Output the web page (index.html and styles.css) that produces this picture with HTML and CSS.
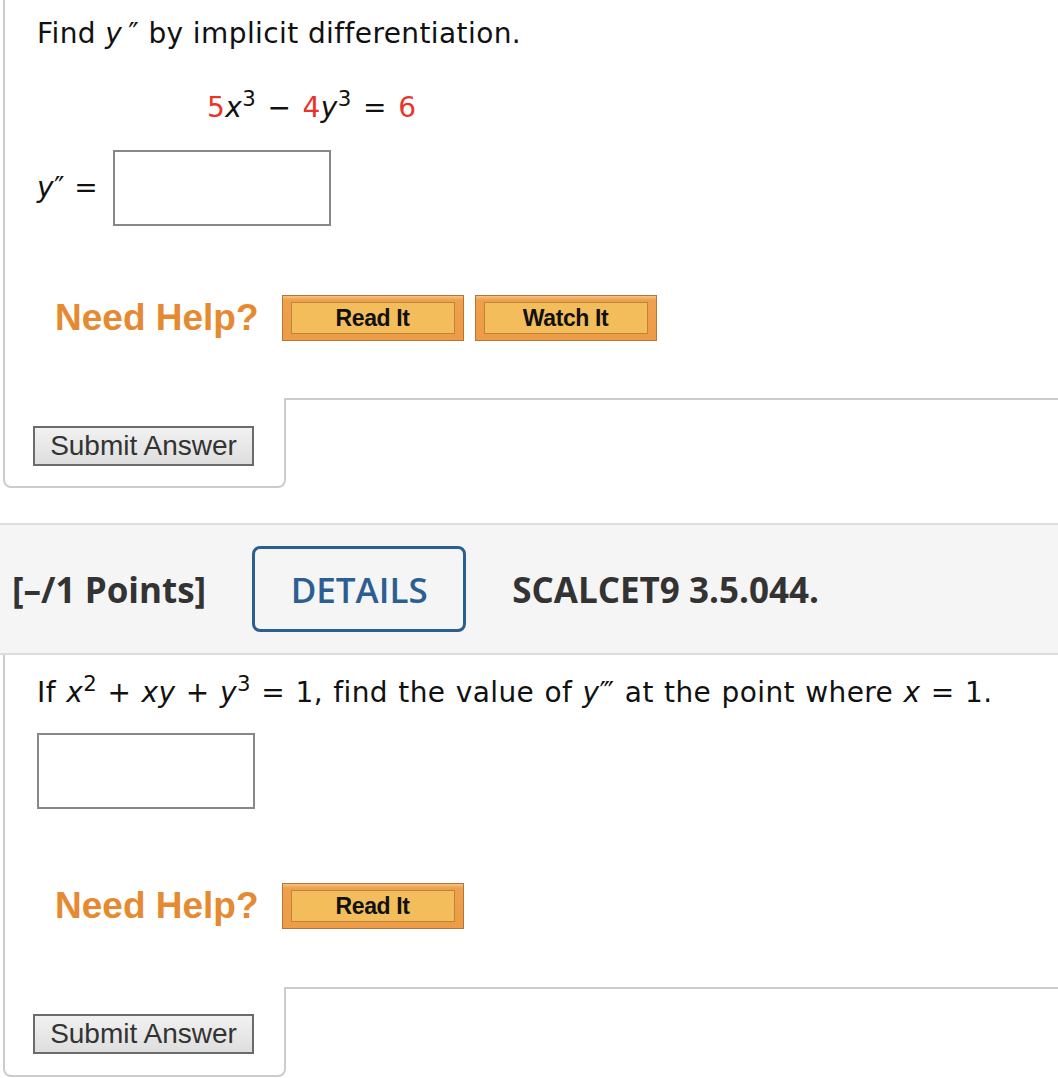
FILE: index.html
```html
<!DOCTYPE html>
<html lang="en">
<head>
<meta charset="utf-8">
<title>Implicit differentiation</title>
<link rel="stylesheet" href="styles.css">
</head>
<body>
<section class="question">
  <div class="q-body">
    <p class="prompt">Find <i>y</i>&#8239;″ by implicit differentiation.</p>
    <p class="equation"><span class="red">5</span><i>x</i><sup>3</sup> &minus; <span class="red">4</span><i>y</i><sup>3</sup> = <span class="red">6</span></p>
    <div class="answer-row">
      <span class="answer-label"><i>y</i>″ =</span>
      <span class="answer-box"></span>
    </div>
    <div class="help-row">
      <span class="need-help">Need Help?</span>
      <button class="help-btn"><span class="help-inner">Read It</span></button>
      <button class="help-btn"><span class="help-inner">Watch It</span></button>
    </div>
  </div>
  <div class="q-foot">
    <div class="submit-cell"><button class="submit-btn">Submit Answer</button></div>
    <div class="foot-rest"></div>
  </div>
</section>

<header class="q-header">
  <span class="points">[–/1 Points]</span>
  <span class="details">DETAILS</span>
  <span class="code">SCALCET9 3.5.044.</span>
</header>

<section class="question second">
  <div class="q-body">
    <p class="prompt">If <i>x</i><sup>2</sup> + <i>xy</i> + <i>y</i><sup>3</sup> = 1, find the value of <i>y</i>‴ at the point where <i>x</i> = 1.</p>
    <div class="answer-row">
      <span class="answer-box"></span>
    </div>
    <div class="help-row">
      <span class="need-help">Need Help?</span>
      <button class="help-btn"><span class="help-inner">Read It</span></button>
    </div>
  </div>
  <div class="q-foot">
    <div class="submit-cell"><button class="submit-btn">Submit Answer</button></div>
    <div class="foot-rest"></div>
  </div>
</section>
</body>
</html>
```

FILE: styles.css
```css
html, body {
  margin: 0;
  padding: 0;
  background: #ffffff;
}

body {
  font-family: "DejaVu Sans", Verdana, sans-serif;
  font-size: 28px;
  letter-spacing: 0.4px;
  color: #111111;
  width: 1058px;
  overflow: hidden;
}

.question {
  display: flex;
  flex-direction: column;
}

.q-body {
  margin-left: 3px;
  border-left: 2px solid #cccccc;
  padding: 18px 0 57px 32px;
}

.prompt {
  margin: 0;
  line-height: 32px;
  white-space: nowrap;
}

.equation {
  margin: 42px 0 0 170px;
  line-height: 32px;
  word-spacing: 2px;
}

.red {
  color: #e8352a;
}

sup {
  font-size: 0.76em;
  line-height: 0;
  vertical-align: 0.5em;
}

.answer-row {
  display: flex;
  align-items: center;
  margin-top: 26px;
}

.answer-label {
  line-height: 32px;
  white-space: nowrap;
  margin-right: 14px;
  width: 62px;
}

.answer-box {
  display: block;
  width: 214px;
  height: 72px;
  border: 2px solid #888888;
  background: #ffffff;
}

.help-row {
  display: flex;
  align-items: center;
  margin-top: 69px;
  padding-left: 18px;
}

.need-help {
  font-family: "Liberation Sans", Arial, sans-serif;
  font-weight: bold;
  font-size: 37px;
  letter-spacing: 0;
  line-height: 46px;
  color: #e68a31;
  margin-right: 23px;
}

.help-btn {
  display: block;
  width: 182px;
  height: 46px;
  margin: 0 11px 0 0;
  padding: 6px 8px 6px 8px;
  border: 1px solid #b2763a;
  background: linear-gradient(#f6c488 0, #efa04a 4px, #ee9c46 100%);
  box-sizing: border-box;
  cursor: pointer;
}

.help-inner {
  display: flex;
  align-items: center;
  justify-content: center;
  height: 100%;
  border: 1px solid #b98640;
  background: #f3bd5b;
  box-sizing: border-box;
  font-family: "Liberation Sans", Arial, sans-serif;
  font-weight: bold;
  font-size: 23px;
  color: #111111;
  letter-spacing: -0.4px;
}

.q-foot {
  display: flex;
  align-items: flex-start;
}

.submit-cell {
  margin-left: 3px;
  width: 283px;
  padding: 28px 0 20px 28px;
  border: 2px solid #cccccc;
  border-top: none;
  border-radius: 0 0 8px 8px;
  box-sizing: border-box;
}

.foot-rest {
  flex: 1;
  border-top: 2px solid #cccccc;
}

.submit-btn {
  display: block;
  width: 221px;
  height: 40px;
  margin: 0;
  padding: 0;
  border: 2px solid #6b6b6b;
  background: linear-gradient(#f1f1f1, #dedede);
  font-family: "Liberation Sans", Arial, sans-serif;
  font-size: 28px;
  letter-spacing: 0;
  color: #333333;
  line-height: 36px;
  cursor: pointer;
}

.q-header {
  margin-top: 35px;
  display: flex;
  align-items: center;
  gap: 46px;
  padding: 21px 0 21px 12px;
  background: #f5f5f5;
  border-top: 2px solid #dddddd;
  border-bottom: 2px solid #dddddd;
  font-family: "Open Sans", sans-serif;
  font-size: 35px;
  letter-spacing: 0;
  color: #333333;
}

.points,
.code {
  font-weight: bold;
}

.details {
  display: flex;
  align-items: center;
  justify-content: center;
  width: 214px;
  height: 86px;
  box-sizing: border-box;
  border: 3px solid #2c5f91;
  border-radius: 8px;
  color: #2c5f91;
  font-weight: 600;
}

.second .q-body {
  padding-top: 22px;
  padding-bottom: 58px;
}

.second .prompt {
  word-spacing: 1px;
}

.second .answer-row {
  margin-top: 24px;
}

.second .help-row {
  margin-top: 74px;
}

.second .submit-cell {
  padding-top: 27px;
  padding-bottom: 21px;
}
```
